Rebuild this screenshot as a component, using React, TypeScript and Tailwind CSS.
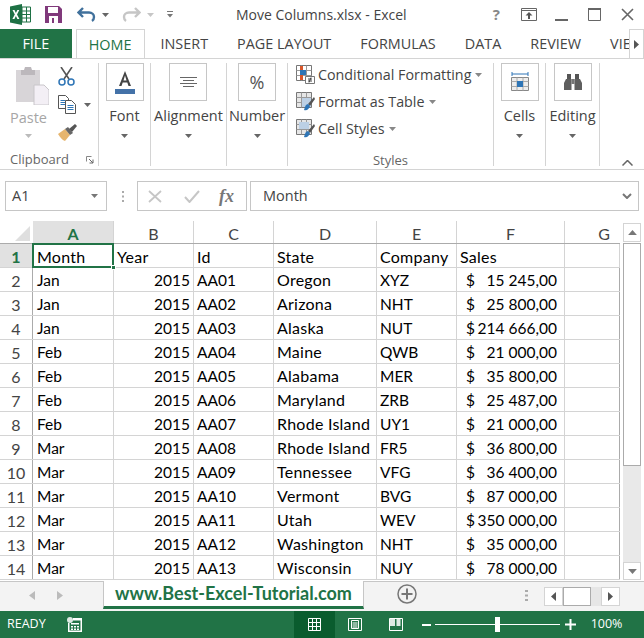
import React from 'react';

const ui = { fontFamily: '"Open Sans", "Noto Sans", sans-serif' };
const cell = { fontFamily: 'Lato, "Open Sans", sans-serif' };

const rows = [
  ['Jan', '2015', 'AA01', 'Oregon', 'XYZ', '15 245,00'],
  ['Jan', '2015', 'AA02', 'Arizona', 'NHT', '25 800,00'],
  ['Jan', '2015', 'AA03', 'Alaska', 'NUT', '214 666,00'],
  ['Feb', '2015', 'AA04', 'Maine', 'QWB', '21 000,00'],
  ['Feb', '2015', 'AA05', 'Alabama', 'MER', '35 800,00'],
  ['Feb', '2015', 'AA06', 'Maryland', 'ZRB', '25 487,00'],
  ['Feb', '2015', 'AA07', 'Rhode Island', 'UY1', '21 000,00'],
  ['Mar', '2015', 'AA08', 'Rhode Island', 'FR5', '36 800,00'],
  ['Mar', '2015', 'AA09', 'Tennessee', 'VFG', '36 400,00'],
  ['Mar', '2015', 'AA10', 'Vermont', 'BVG', '87 000,00'],
  ['Mar', '2015', 'AA11', 'Utah', 'WEV', '350 000,00'],
  ['Mar', '2015', 'AA12', 'Washington', 'NHT', '35 000,00'],
  ['Mar', '2015', 'AA13', 'Wisconsin', 'NUY', '78 000,00'],
];

const colWidths = ['w-[81px]', 'w-[80px]', 'w-[80px]', 'w-[103px]', 'w-[80px]', 'w-[108px]', 'w-[55px]'];

function Caret({ className = '' }: { className?: string }) {
  return (
    <svg width="7" height="4" viewBox="0 0 7 4" className={className}>
      <path d="M0 0h7L3.5 4z" fill="currentColor" />
    </svg>
  );
}

function TitleBar() {
  return (
    <div className="relative flex h-[29px] items-center bg-white">
      <svg width="21" height="21" viewBox="0 0 21 21" className="ml-[10px]">
        <path d="M0 2.5 12 0v21L0 18.5z" fill="#1e7145" />
        <path d="M12 3h8.500v15H12z" fill="#fff" stroke="#1e7145" />
        <path d="M12 7h9M12 10.500h9M12 14h9M16.500 3v15" stroke="#1e7145" />
        <path d="m2.500 6 2.300 4.500L2.400 15h2l1.500-3 1.500 3h2L7 10.500 9.300 6h-1.900L5.900 9 4.500 6z" fill="#fff" />
      </svg>
      <svg width="17" height="17" viewBox="0 0 17 17" className="ml-[14px]">
        <path d="M0 0h14l3 3v14H0z" fill="#80397b" />
        <path d="M3 1h10v6H3z" fill="#fff" />
        <path d="M4 10h9v7H4z" fill="#fff" />
        <path d="M7 12h2v5H7z" fill="#80397b" />
      </svg>
      <svg width="19" height="15" viewBox="0 0 19 15" className="ml-[15px]">
        <path d="M6 1 1.500 5.500 6 10M2 5.500h10c3 0 5 2 5 4.500 0 1.500-.5 3-2 4" fill="none" stroke="#41719c" strokeWidth="2.400" />
      </svg>
      <Caret className="ml-[6px] text-[#666]" />
      <svg width="19" height="15" viewBox="0 0 19 15" className="ml-[13px]">
        <path d="M13 1l4.500 4.500L13 10M17 5.500H7c-3 0-5 2-5 4.500 0 1.500.5 3 2 4" fill="none" stroke="#c6c6c6" strokeWidth="2.400" />
      </svg>
      <Caret className="ml-[6px] text-[#c6c6c6]" />
      <svg width="6" height="7" viewBox="0 0 6 7" className="ml-[13px]">
        <path d="M0 0h6v1H0z" fill="#777" />
        <path d="M0 3h6L3 6.500z" fill="#777" />
      </svg>
      <span className="ml-[63px] whitespace-nowrap text-[14px] text-[#444]" style={ui}>Move Columns.xlsx - Excel</span>
      <div className="ml-auto flex items-center">
        <span className="mr-[21px] text-[15px] font-bold text-[#888]" style={ui}>?</span>
        <svg width="16" height="13" viewBox="0 0 16 13" className="mr-[18px]">
          <path d="M.5.500h15v12H.5zM.5 2.500h15" fill="none" stroke="#666" />
          <path d="M8 4l3.500 3.500H9V11H7V7.500H4.500z" fill="#555" />
        </svg>
        <svg width="13" height="13" viewBox="0 0 13 13" className="mr-[20px]">
          <path d="M0 11h13v2H0z" fill="#666" />
        </svg>
        <svg width="13" height="13" viewBox="0 0 13 13" className="mr-[20px]">
          <path d="M.5.500h12v12H.5z" fill="none" stroke="#666" />
          <path d="M0 0h13v2H0z" fill="#666" />
        </svg>
        <svg width="13" height="13" viewBox="0 0 13 13" className="mr-[10px]">
          <path d="m1 1 11 11M12 1 1 12" stroke="#666" strokeWidth="1.600" />
        </svg>
      </div>
    </div>
  );
}

function Tabs() {
  return (
    <div className="relative flex h-[30px] overflow-hidden border-b border-[#d4d4d4] bg-white text-[14.400px] text-[#444]" style={ui}>
      <div className="flex w-[73px] items-center justify-center bg-[#217346] text-white">FILE</div>
      <div className="ml-[4px] flex h-[30px] w-[70px] items-center justify-center border border-b-0 border-[#d4d4d4] bg-white text-[#217346]">HOME</div>
      <div className="flex gap-[29px] whitespace-nowrap pl-[16px] leading-[29px]">
        <span>INSERT</span>
        <span>PAGE LAYOUT</span>
        <span>FORMULAS</span>
        <span>DATA</span>
        <span>REVIEW</span>
        <span>VIEW</span>
      </div>
      <div className="absolute right-0 top-0 flex h-[30px] w-[15px] items-center justify-center border border-[#d4d4d4] bg-white">
        <svg width="5" height="9" viewBox="0 0 5 9"><path d="M0 0l5 4.500L0 9z" fill="#555" /></svg>
      </div>
    </div>
  );
}

function BigBtn({ label, children }: { label: string; children: React.ReactNode }) {
  return (
    <div className="flex flex-col items-center">
      <div className="flex h-[38px] w-[38px] items-center justify-center border border-[#c6c6c6]">{children}</div>
      <span className="mt-[4px] whitespace-nowrap text-[14.5px] leading-[22px] text-[#444]">{label}</span>
      <Caret className="mt-[7px] text-[#666]" />
    </div>
  );
}

function Group({ w, children }: { w: string; children: React.ReactNode }) {
  return <div className={`flex h-[103px] shrink-0 justify-center border-r border-[#d4d4d4] ${w}`}>{children}</div>;
}

function StyleRow({ icon, label }: { icon: React.ReactNode; label: string }) {
  return (
    <div className="flex h-[27px] items-center gap-[3px] whitespace-nowrap">
      {icon}
      <span className="text-[14.300px] text-[#444]">{label}</span>
      <Caret className="ml-[1px] text-[#888]" />
    </div>
  );
}

function TableIcon({ kind }: { kind: 'cond' | 'table' | 'cell' }) {
  return (
    <svg width="19" height="19" viewBox="0 0 19 19">
      <path d="M.5.500h15v15H.5z" fill={kind === 'cond' ? '#fff' : '#e6e6e6'} stroke="#777" />
      <path d="M.5 5.500h15M.5 10.500h15M5.500.500v15M10.500.500v15" stroke="#999" />
      {kind === 'cond' && <path d="M4 1h3v4H4z" fill="#d9572b" />}
      {kind === 'cond' && <path d="M4 5h6v5H4z" fill="#2e75b6" />}
      {kind === 'cond' && <path d="M4 10h3v5H4z" fill="#d9572b" />}
      {kind === 'cond' && <path d="M9.500 11.500h9v7h-9z" fill="#fff" stroke="#777" />}
      {kind === 'cond' && <path d="M12 14h4M12 16h4M13 17.500l2-5" stroke="#444" />}
      {kind === 'cell' && <path d="M3 3h10v7H3z" fill="#bcd0e5" />}
      {kind === 'table' && <path d="M6 6h9v9H6z" fill="#bcd0e5" />}
      {kind !== 'cond' && <path d="M18 5 12 12l2 2 5-7z" fill="#555" />}
      {kind !== 'cond' && <path d="M12 12c-2 0-3 2-4 6 3 1 5-1 6-4z" fill="#2e75b6" />}
    </svg>
  );
}

function Ribbon() {
  return (
    <div className="flex h-[111px] border-b border-[#d4d4d4] bg-white pt-[4px]" style={ui}>
      <div className="flex h-[103px] w-[99px] shrink-0 flex-col border-r border-[#d4d4d4]">
        <div className="flex h-[91px]">
          <div className="ml-[15px] flex w-[34px] flex-col items-center">
            <svg width="34" height="38" viewBox="0 0 34 38" className="mt-[4px]">
              <path d="M1 3h24v32H1z" fill="#d8d5d8" />
              <path d="M6 3h3l1-3h6l1 3h3v5H6z" fill="#bcb8bc" />
              <path d="M19 18h10l5 5v15H19z" fill="#f3eff5" stroke="#c9c6ca" />
            </svg>
            <span className="ml-[-7px] mt-[3px] text-[14.5px] leading-[20px] text-[#a6a6a6]">Paste</span>
            <Caret className="ml-[-7px] mt-[6px] text-[#bbb]" />
          </div>
          <div className="ml-[9px] flex flex-col">
            <svg width="17" height="19" viewBox="0 0 17 19" className="mt-[4px]">
              <path d="M3 0l8 12M14 0 6 12" stroke="#555" strokeWidth="1.600" />
              <circle cx="4" cy="15" r="3" fill="none" stroke="#2e75b6" strokeWidth="1.500" />
              <circle cx="13" cy="15" r="3" fill="none" stroke="#2e75b6" strokeWidth="1.500" />
            </svg>
            <div className="mt-[9px] flex items-center">
              <svg width="18" height="19" viewBox="0 0 18 19">
                <path d="M.5.500h7l3 3v10H.5z" fill="#fff" stroke="#555" />
                <path d="M2.500 5.500h5M2.500 7.500h5M2.500 9.500h5" stroke="#2e75b6" />
                <path d="M7.500 5.500h6l4 4v9h-10z" fill="#fff" stroke="#555" />
                <path d="M9.500 10.500h6M9.500 12.500h6M9.500 14.500h6" stroke="#2e75b6" />
              </svg>
              <Caret className="ml-[8px] text-[#666]" />
            </div>
            <svg width="19" height="17" viewBox="0 0 19 17" className="mt-[10px]">
              <path d="M0 10l7-5 5 6-5 6c-3-1-5-4-7-7z" fill="#e6b56e" />
              <path d="M7 5l3-2 5 6-3 2z" fill="#666" />
              <path d="M11 5l6-5 2 2-5 6z" fill="#555" />
            </svg>
          </div>
        </div>
        <div className="flex h-[12px] items-center">
          <span className="ml-[10px] text-[13px] text-[#666]">Clipboard</span>
          <svg width="8" height="8" viewBox="0 0 8 8" className="ml-[17px]">
            <path d="M.5.500h5M.5.500v5" stroke="#888" fill="none" />
            <path d="M3 3l4 4M7 3.500V7H3.500" stroke="#666" fill="none" />
          </svg>
        </div>
      </div>
      <Group w="w-[52px]">
        <BigBtn label="Font">
          <svg width="20" height="24" viewBox="0 0 20 24">
            <path d="M10 1 4 16h2.500l1.200-3.500h4.600L13.500 16H16zM8.500 10.500 10 5.500l1.500 5z" fill="#444" />
            <path d="M0 19h20v5H0z" fill="#4472a8" />
          </svg>
        </BigBtn>
      </Group>
      <Group w="w-[76px]">
        <BigBtn label="Alignment">
          <svg width="17" height="11" viewBox="0 0 17 11">
            <path d="M0 .500h17M3 3.500h11M0 6.500h17M3 9.500h11" stroke="#666" />
          </svg>
        </BigBtn>
      </Group>
      <Group w="w-[61px]">
        <BigBtn label="Number">
          <span className="text-[18px] text-[#555]">%</span>
        </BigBtn>
      </Group>
      <div className="flex h-[103px] w-[206px] shrink-0 flex-col border-r border-[#d4d4d4] pl-[8px]">
        <div className="mt-[-2px] flex flex-col">
          <StyleRow icon={<TableIcon kind="cond" />} label="Conditional Formatting" />
          <StyleRow icon={<TableIcon kind="table" />} label="Format as Table" />
          <StyleRow icon={<TableIcon kind="cell" />} label="Cell Styles" />
        </div>
        <div className="mt-auto h-[12px] pr-[8px] text-center text-[13px] leading-[12px] text-[#666]">Styles</div>
      </div>
      <Group w="w-[52px]">
        <BigBtn label="Cells">
          <svg width="18" height="21" viewBox="0 0 18 21">
            <path d="M1 2h16M1 0v4M17 0v4" stroke="#2e75b6" fill="none" />
            <path d="M.5 5.500h17v13H.5z" fill="#eee" stroke="#888" />
            <path d="M.5 9.500h17M.5 14.500h17M6 5.500v13M12 5.500v13" stroke="#aaa" />
            <path d="M6 9h6v6H6z" fill="#2e75b6" />
          </svg>
        </BigBtn>
      </Group>
      <Group w="w-[54px]">
        <BigBtn label="Editing">
          <svg width="18" height="16" viewBox="0 0 18 16">
            <path d="M3 0h4v5H3zM11 0h4v5h-4z" fill="#555" />
            <path d="M2 5h5.500v11H0V9zM10.500 5H16l2 4v7h-7.500z" fill="#5f5f5f" />
            <path d="M7.500 5h3v5h-3z" fill="#777" />
          </svg>
        </BigBtn>
      </Group>
      <div className="flex flex-1 items-end justify-end pb-[3px] pr-[11px]">
        <svg width="11" height="6" viewBox="0 0 11 6"><path d="m.5 5.500 5-5 5 5" fill="none" stroke="#666" strokeWidth="1.500" /></svg>
      </div>
    </div>
  );
}

function FormulaBar() {
  return (
    <div className="flex h-[51px] items-start bg-white pt-[11px]" style={ui}>
      <div className="ml-[5px] flex h-[30px] w-[102px] items-center justify-between border border-[#c6c6c6] pl-[6px] pr-[8px] text-[14.5px] text-[#444]">
        A1
        <Caret className="text-[#777]" />
      </div>
      <svg width="3" height="11" viewBox="0 0 3 11" className="ml-[14px] mt-[10px]">
        <path d="M1 0h2v2H1zM1 4.500h2v2H1zM1 9h2v2H1z" fill="#aaa" />
      </svg>
      <div className="ml-[13px] flex h-[30px] w-[110px] items-center border border-[#c6c6c6] pl-[10px]">
        <svg width="14" height="13" viewBox="0 0 14 13"><path d="m1 1 12 11M13 1 1 12" stroke="#c6c6c6" strokeWidth="1.800" /></svg>
        <svg width="16" height="13" viewBox="0 0 16 13" className="ml-[22px]"><path d="m1 7 4.500 5L15 1" fill="none" stroke="#c6c6c6" strokeWidth="2" /></svg>
        <span className="ml-[19px] text-[18px] font-bold italic leading-none text-[#777]" style={{ fontFamily: '"Liberation Serif", serif' }}>fx</span>
      </div>
      <div className="ml-[3px] flex h-[30px] w-[389px] items-center justify-between border border-[#c6c6c6] pl-[12px] pr-[6px] text-[14.5px] text-[#444]">
        Month
        <svg width="10" height="6" viewBox="0 0 10 6"><path d="m1 1 4 4 4-4" fill="none" stroke="#777" strokeWidth="2" /></svg>
      </div>
    </div>
  );
}

function Sheet() {
  return (
    <div className="w-[620px] shrink-0 text-[15.500px] text-black" style={cell}>
      <div className="flex h-[23px] border-b border-[#ababab] text-[16px] text-[#444]">
        <div className="flex w-[33px] items-end justify-end bg-white pb-[2px] pr-[3px]">
          <svg width="15" height="15" viewBox="0 0 15 15"><path d="M15 0v15H0z" fill="#dfdfdf" /></svg>
        </div>
        {['A', 'B', 'C', 'D', 'E', 'F'].map((c, i) => (
          <div
            key={c}
            className={`flex items-center justify-center border-r border-[#d4d4d4] pt-[3px] ${colWidths[i]} ${i === 0 ? 'bg-[#e1e1e1] font-bold text-[#217346]' : ''}`}
          >
            {c}
          </div>
        ))}
        <div className="flex w-[55px] items-center justify-end pr-[10px] pt-[3px]">G</div>
      </div>
      <div className="relative flex h-[24px] border-b border-[#d4d4d4] text-[16px] tracking-[0.25px]">
        <div className="flex w-[33px] items-center justify-center border-r border-[#ababab] bg-[#e1e1e1] pt-[3px] font-bold text-[#217346]">1</div>
        {['Month', 'Year', 'Id', 'State', 'Company', 'Sales', ''].map((v, i) => (
          <div key={i} className={`flex items-center whitespace-nowrap border-r border-[#d4d4d4] pt-[3px] ${i === 0 ? 'pl-[4px]' : 'pl-[3px]'} ${colWidths[i]}`}>{v}</div>
        ))}
        {/* active cell frame */}
        <div className="absolute left-[32px] top-[-1px] h-[25px] w-[82px] border-2 border-[#217346]" />
        <div className="absolute left-[111px] top-[21px] h-[5px] w-[5px] border border-white bg-[#217346]" />
      </div>
      {rows.map((r, idx) => (
        <div key={idx} className="flex h-[24px] border-b border-[#d4d4d4]">
          <div className="flex w-[33px] items-center justify-center border-r border-[#ababab] pt-[3px] text-[16px] text-[#444]">{idx + 2}</div>
          <div className={`flex items-center border-r border-[#d4d4d4] pl-[4px] pt-[3px] ${colWidths[0]}`}>{r[0]}</div>
          <div className={`flex items-center justify-end border-r border-[#d4d4d4] pr-[3px] pt-[3px] ${colWidths[1]}`}>{r[1]}</div>
          <div className={`flex items-center border-r border-[#d4d4d4] pl-[3px] pt-[3px] ${colWidths[2]}`}>{r[2]}</div>
          <div className={`flex items-center whitespace-nowrap border-r border-[#d4d4d4] pl-[3px] pt-[1px] text-[16px] tracking-[0.25px] ${colWidths[3]}`}>{r[3]}</div>
          <div className={`flex items-center border-r border-[#d4d4d4] pl-[3px] pt-[3px] ${colWidths[4]}`}>{r[4]}</div>
          <div className={`flex items-center justify-between whitespace-nowrap border-r border-[#d4d4d4] pl-[9px] pr-[7px] pt-[3px] ${colWidths[5]}`}>
            <span>$</span>
            <span>{r[5]}</span>
          </div>
          <div className={`border-r border-[#ababab] ${colWidths[6]}`} />
        </div>
      ))}
    </div>
  );
}

function VScroll() {
  return (
    <div className="ml-[3px] flex h-[359px] w-[18px] flex-col pt-[2px]">
      <div className="flex h-[19px] items-center justify-center border border-[#d4d4d4] text-[#777]">
        <Caret className="h-[5px] w-[9px] rotate-180" />
      </div>
      <div className="mt-[1px] h-[223px] border border-[#ababab] bg-white" />
      <div className="flex-1 bg-[#e9e9e9]" />
      <div className="flex h-[18px] items-center justify-center border border-[#d4d4d4] text-[#777]">
        <Caret className="h-[5px] w-[9px]" />
      </div>
    </div>
  );
}

function SheetTabs() {
  return (
    <div className="flex h-[30px] border-t border-[#c6c6c6] bg-[#f3f3f3]">
      <div className="flex h-[26px] w-[103px] items-center pl-[29px]">
        <svg width="6" height="9" viewBox="0 0 6 9"><path d="M6 0v9L0 4.500z" fill="#bbb" /></svg>
        <svg width="6" height="9" viewBox="0 0 6 9" className="ml-[22px]"><path d="M0 0v9l6-4.500z" fill="#bbb" /></svg>
      </div>
      <div className="mt-[-1px] flex h-[28px] w-[261px] items-center justify-center border-x border-b-[3px] border-[#c6c6c6] border-b-[#217346] bg-white text-[18px] font-bold text-[#217346]" style={cell}>
        www.Best-Excel-Tutorial.com
      </div>
      <svg width="20" height="20" viewBox="0 0 20 20" className="ml-[33px] mt-[2px]">
        <circle cx="10" cy="10" r="9" fill="none" stroke="#777" strokeWidth="1.500" />
        <path d="M10 4.500v11M4.500 10h11" stroke="#777" strokeWidth="2" />
      </svg>
      <svg width="3" height="11" viewBox="0 0 3 11" className="ml-[108px] mt-[8px]">
        <path d="M0 0h3v2H0zM0 4.500h3v2H0zM0 9h3v2H0z" fill="#aaa" />
      </svg>
      <div className="ml-[16px] mt-[5px] flex h-[19px] w-[76px]">
        <div className="flex w-[19px] items-center justify-center border border-[#d4d4d4] bg-white">
          <svg width="5" height="9" viewBox="0 0 5 9"><path d="M5 0v9L0 4.500z" fill="#555" /></svg>
        </div>
        <div className="w-[28px] border border-[#ababab] bg-white" />
        <div className="w-[10px] bg-[#e6e6e6]" />
        <div className="flex w-[19px] items-center justify-center border border-[#d4d4d4] bg-white">
          <svg width="5" height="9" viewBox="0 0 5 9"><path d="M0 0v9l5-4.500z" fill="#555" /></svg>
        </div>
      </div>
    </div>
  );
}

function StatusBar() {
  return (
    <div className="flex h-[27px] items-center bg-[#217346] text-white" style={ui}>
      <span className="ml-[7px] text-[12.500px]">READY</span>
      <svg width="15" height="15" viewBox="0 0 15 15" className="ml-[21px]">
        <circle cx="3" cy="3" r="3" fill="#fff" opacity="0.85" />
        <path d="M6 1h9v14H1V6h1.500v7.500h11V3.500H6z" fill="#fff" />
        <path d="M4 6h8v1.500H4zM4 9h2v1.500H4zM7 9h2v1.500H7zM10 9h2v1.500h-2zM4 11.500h2V13H4zM7 11.500h2V13H7zM10 11.500h2V13h-2z" fill="#fff" />
      </svg>
      <div className="ml-[212px] flex h-[27px] w-[41px] items-center justify-center bg-[#0a5c2e]">
        <svg width="13" height="13" viewBox="0 0 13 13">
          <path d="M.5.500h12v12H.5zM.5 4.500h12M.5 8.500h12M4.500.500v12M8.500.500v12" fill="none" stroke="#fff" />
        </svg>
      </div>
      <svg width="14" height="13" viewBox="0 0 14 13" className="ml-[13px]">
        <path d="M.5.500h13v12H.5z" fill="none" stroke="#fff" />
        <path d="M3.500 2.500h7v8h-7z" fill="none" stroke="#fff" />
        <path d="M4.500 5h5M4.500 7h5M4.500 9h5" stroke="#fff" />
      </svg>
      <svg width="14" height="13" viewBox="0 0 14 13" className="ml-[27px]">
        <path d="M.5.500h13v12H.5z" fill="none" stroke="#fff" />
        <path d="M1 1h5v7H1zM7.500 1h4v7h-4z" fill="#fff" opacity="0.85" />
      </svg>
      <div className="ml-[19px] h-[2px] w-[9px] bg-white" />
      <div className="relative ml-[4px] h-[1px] w-[125px] bg-white">
        <div className="absolute left-[60px] top-[-7px] h-[15px] w-[5px] bg-white" />
      </div>
      <svg width="11" height="11" viewBox="0 0 11 11" className="ml-[5px]">
        <path d="M4.500 0h2v11h-2zM0 4.500h11v2H0z" fill="#fff" />
      </svg>
      <span className="ml-[15px] text-[12.500px]">100%</span>
    </div>
  );
}

export default function App() {
  return (
    <div className="h-[638px] w-[644px] overflow-hidden bg-white">
      <TitleBar />
      <Tabs />
      <Ribbon />
      <FormulaBar />
      <div className="flex h-[360px] overflow-hidden">
        <Sheet />
        <VScroll />
      </div>
      <SheetTabs />
      <StatusBar />
    </div>
  );
}
